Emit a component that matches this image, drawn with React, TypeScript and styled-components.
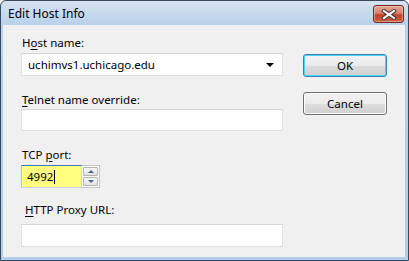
import React from "react";
import styled, { createGlobalStyle } from "styled-components";

const GlobalStyle = createGlobalStyle`
  html, body { margin: 0; padding: 0; background: #ffffff; }
  * { box-sizing: border-box; }
`;

const FONT = `"Noto Sans", "Open Sans", "Liberation Sans", sans-serif`;

const Window = styled.div`
  width: 409px;
  height: 261px;
  display: flex;
  flex-direction: column;
  border: 1px solid #3a4a5e;
  border-radius: 6px 6px 0 0;
  background: linear-gradient(#d6e3f1 0px, #b9d1ea 24px, #b3cee9 100%);
  font-family: ${FONT};
  font-size: 11.5px;
  color: #000;
  overflow: hidden;
`;

const TitleBar = styled.div`
  height: 24px;
  flex: none;
  display: flex;
  justify-content: space-between;
  align-items: flex-start;
  padding: 0 4px 0 7px;
`;

const Title = styled.div`
  font-size: 12px;
  line-height: 15px;
  margin-top: 5px;
  color: #000;
`;

const CloseButton = styled.div`
  width: 31px;
  height: 18px;
  margin-top: 4px;
  border: 1px solid #6e2a20;
  border-radius: 3px;
  background: linear-gradient(#e6a898 0%, #d7816c 45%, #c2432b 55%, #cc5e41 100%);
  box-shadow: inset 0 0 0 1px rgba(255, 220, 210, 0.45);
  display: flex;
  align-items: center;
  justify-content: center;
`;

const Client = styled.div`
  flex: 1;
  margin: 0 3px 3px 2px;
  background: #f0f0f0;
  display: flex;
  gap: 20px;
  padding: 10px 18px 0 18px;
`;

const Form = styled.div`
  width: 262px;
  display: flex;
  flex-direction: column;
`;

const Label = styled.div<{ $top: number; $indent?: number }>`
  line-height: 15px;
  height: 15px;
  margin-top: ${(p) => p.$top}px;
  padding-left: ${(p) => 1 + (p.$indent ?? 0)}px;
  white-space: nowrap;
  u { text-underline-offset: 2px; }
`;

const Field = styled.div<{ $top: number; $height: number }>`
  margin-top: ${(p) => p.$top}px;
  height: ${(p) => p.$height}px;
  background: #ffffff;
  border: 1px solid #dcdfe4;
  border-top-color: #d2d5da;
  display: flex;
  align-items: center;
  padding: 0 6px;
  line-height: 15px;
`;

const ComboText = styled.span`
  flex: 1;
`;

const Arrow = styled.span`
  width: 0;
  height: 0;
  border-left: 4px solid transparent;
  border-right: 4px solid transparent;
  border-top: 4px solid #000;
  margin-right: 2px;
`;

const SpinRow = styled.div`
  margin-top: 3px;
  display: flex;
  height: 23px;
`;

const SpinInput = styled.div`
  width: 61px;
  height: 23px;
  background: #ffff80;
  border: 1px solid #c5daed;
  border-top-color: #3d7bad;
  border-left-color: #a4c9e3;
  display: flex;
  align-items: center;
  padding-left: 5px;
  line-height: 15px;
`;

const Caret = styled.span`
  display: inline-block;
  width: 1px;
  height: 14px;
  background: #000;
  margin-left: 1px;
`;

const SpinButtons = styled.div`
  width: 18px;
  height: 23px;
  border: 1px solid #c3c3c3;
  border-left: none;
  display: flex;
  flex-direction: column;
  gap: 1px;
  padding: 1px;
  background: #ffffff;
`;

const SpinButton = styled.div`
  flex: 1;
  border: 1px solid #b5b5b5;
  border-radius: 1px;
  background: linear-gradient(#f6f6f6, #e2e2e2);
  display: flex;
  align-items: center;
  justify-content: center;
`;

const Tri = styled.span<{ $up?: boolean }>`
  width: 0;
  height: 0;
  border-left: 3px solid transparent;
  border-right: 3px solid transparent;
  ${(p) =>
    p.$up ? "border-bottom: 3px solid #4d6185;" : "border-top: 3px solid #4d6185;"}
`;

const Buttons = styled.div`
  width: 84px;
  display: flex;
  flex-direction: column;
  gap: 15px;
  padding-top: 19px;
`;

const Button = styled.div<{ $default?: boolean }>`
  height: 23px;
  border-radius: 3px;
  border: 1px solid ${(p) => (p.$default ? "#3c7fb1" : "#707070")};
  background: linear-gradient(#f2f2f2 0%, #ebebeb 50%, #dddddd 51%, #cfcfcf 100%);
  box-shadow: inset 0 0 0 1px ${(p) => (p.$default ? "#48d7fb" : "#fcfcfc")};
  display: flex;
  align-items: center;
  justify-content: center;
  line-height: 15px;
`;

export default function App() {
  return (
    <>
      <GlobalStyle />
      <Window>
        <TitleBar>
          <Title>Edit Host Info</Title>
          <CloseButton>
            <svg width="16" height="11" viewBox="0 0 16 11">
              <path d="M3 2 L13 9 M13 2 L3 9" stroke="#4a3a36" strokeWidth="4" strokeLinecap="square" />
              <path d="M3 2 L13 9 M13 2 L3 9" stroke="#ffffff" strokeWidth="2" strokeLinecap="square" />
            </svg>
          </CloseButton>
        </TitleBar>
        <Client>
          <Form>
            <Label $top={0}>
              H<u>o</u>st name:
            </Label>
            <Field $top={3} $height={23}>
              <ComboText>uchimvs1.uchicago.edu</ComboText>
              <Arrow />
            </Field>
            <Label $top={16}>
              <u>T</u>elnet name override:
            </Label>
            <Field $top={2} $height={22} />
            <Label $top={16}>
              TCP <u>p</u>ort:
            </Label>
            <SpinRow>
              <SpinInput>
                4992
                <Caret />
              </SpinInput>
              <SpinButtons>
                <SpinButton>
                  <Tri $up />
                </SpinButton>
                <SpinButton>
                  <Tri />
                </SpinButton>
              </SpinButtons>
            </SpinRow>
            <Label $top={14} $indent={3}>
              <u>H</u>TTP Proxy URL:
            </Label>
            <Field $top={7} $height={23} />
          </Form>
          <Buttons>
            <Button $default>OK</Button>
            <Button>Cancel</Button>
          </Buttons>
        </Client>
      </Window>
    </>
  );
}
